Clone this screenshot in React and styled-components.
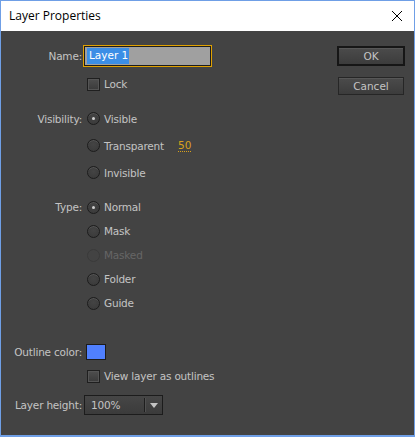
import { createGlobalStyle, styled } from "styled-components"

const GlobalStyle = createGlobalStyle`
   html, body {
      margin: 0;
      padding: 0;
      background: #ffffff;
   }
   * {
      box-sizing: border-box;
   }
`

const Window = styled.div`
   width: 415px;
   height: 437px;
   display: flex;
   flex-direction: column;
   border: 1px solid #6f9fe6;
   border-bottom-width: 2px;
   background: #434343;
   font-family: Tahoma, "DejaVu Sans", sans-serif;
   font-size: 10.5px;
   letter-spacing: -0.2px;
   color: #c4c4c4;
`
const TitleBar = styled.div`
   height: 30px;
   flex: none;
   display: flex;
   align-items: center;
   justify-content: space-between;
   padding: 0 9px 1px 8px;
   background: #ffffff;
   color: #000000;
   font-family: "Segoe UI", "Open Sans", sans-serif;
   font-size: 12px;
   letter-spacing: 0;
`
const CloseIcon = styled.svg`
   width: 12px;
   height: 12px;
   margin-right: 2px;
`
const Body = styled.div`
   flex: 1;
   display: flex;
`
const Form = styled.div`
   flex: 1;
   display: flex;
   flex-direction: column;
   padding-top: 14px;
`
const Row = styled.div`
   display: grid;
   grid-template-columns: 81px 1fr;
   column-gap: 1px;
   align-items: center;
   height: ${p => p.$h || 24}px;
   margin-top: ${p => p.$mt || 0}px;
`
const Label = styled.span`
   text-align: right;
   white-space: nowrap;
`
const Control = styled.div`
   display: flex;
   align-items: center;
   padding-left: ${p => p.$pl || 0}px;
`
const NameInput = styled.div`
   width: 129px;
   height: 22px;
   border: 1px solid #e0a100;
   padding: 1px;
   background: #1c1c1c;
`
const NameField = styled.div`
   height: 100%;
   background: #a0a0a0;
   display: flex;
   align-items: center;
   padding-left: 2px;
`
const Selected = styled.span`
   background: #3b8ee6;
   color: #ffffff;
   padding: 1px 1px 2px 2px;
   line-height: 13px;
   letter-spacing: 0;
`
const Box = styled.span`
   width: 13px;
   height: 13px;
   border: 1px solid #1f1f1f;
   background: linear-gradient(#4e4e4e, #3a3a3a);
   box-shadow: inset 0 0 0 1px #555;
   margin-right: 4px;
   flex: none;
`
const Radio = styled.span`
   width: 13px;
   height: 13px;
   border-radius: 50%;
   border: 1px solid ${p => (p.$disabled ? "#3a3a3a" : "#1c1c1c")};
   background: ${p => (p.$disabled ? "#434343" : "radial-gradient(circle at 50% 40%, #444 0%, #383838 100%)")};
   box-shadow: ${p => (p.$disabled ? "none" : "inset 0 1px 0 #555")};
   margin-right: 4px;
   flex: none;
   display: flex;
   align-items: center;
   justify-content: center;
   &::after {
      content: "";
      width: 3px;
      height: 3px;
      border-radius: 50%;
      background: #d0d0d0;
      display: ${p => (p.$checked ? "block" : "none")};
   }
`
const OptionText = styled.span`
   color: ${p => (p.$disabled ? "#666666" : "#c4c4c4")};
   white-space: nowrap;
`
const Amount = styled.span`
   margin-left: 14px;
   color: #d9a11c;
   border-bottom: 1px dotted #d9a11c;
   line-height: 11px;
   letter-spacing: 0;
`
const Swatch = styled.span`
   width: 20px;
   height: 16px;
   border: 1px solid #1c1c1c;
   background: #5080ff;
`
const Dropdown = styled.div`
   width: 79px;
   height: 20px;
   border: 1px solid #1c1c1c;
   background: linear-gradient(#464646, #3b3b3b);
   display: flex;
   align-items: center;
`
const DropValue = styled.span`
   flex: 1;
   padding-left: 6px;
`
const Divider = styled.span`
   width: 1px;
   height: 14px;
   background: #1e1e1e;
   box-shadow: 1px 0 0 #505050;
`
const Arrow = styled.span`
   width: 17px;
   display: flex;
   justify-content: center;
   &::after {
      content: "";
      border-left: 4px solid transparent;
      border-right: 4px solid transparent;
      border-top: 5px solid #c4c4c4;
   }
`
const Buttons = styled.div`
   display: flex;
   flex-direction: column;
   align-items: flex-end;
   gap: 11px;
   padding: 15px 9px 0 0;
`
const Button = styled.button`
   width: ${p => (p.$default ? 68 : 66)}px;
   height: ${p => (p.$default ? 20 : 18)}px;
   margin-right: ${p => (p.$default ? 0 : 1)}px;
   border: ${p => (p.$default ? "2px solid #161616" : "1px solid #262626")};
   background: linear-gradient(#4b4b4b, #3c3c3c);
   box-shadow: inset 0 1px 0 #575757;
   color: #c4c4c4;
   font-family: Tahoma, "DejaVu Sans", sans-serif;
   font-size: 10.5px;
   padding: 0;
   cursor: pointer;
`

const RadioRow = ({ h, mt, label, checked, disabled, children }) => (
   <Row $h={h} $mt={mt}>
      <Label>{label}</Label>
      <Control $pl={4}>
         <Radio $checked={checked} $disabled={disabled} />
         <OptionText $disabled={disabled}>{children}</OptionText>
      </Control>
   </Row>
)

const App = () => {
   return (
      <Window>
         <GlobalStyle />
         <TitleBar>
            <span>Layer Properties</span>
            <CloseIcon viewBox="0 0 12 12">
               <path d="M1 1 L11 11 M11 1 L1 11" stroke="#000" strokeWidth="1" fill="none" />
            </CloseIcon>
         </TitleBar>
         <Body>
            <Form>
               <Row $h={22}>
                  <Label>Name:</Label>
                  <Control>
                     <NameInput>
                        <NameField>
                           <Selected>Layer 1</Selected>
                        </NameField>
                     </NameInput>
                  </Control>
               </Row>
               <Row $mt={5}>
                  <span />
                  <Control $pl={4}>
                     <Box />
                     <OptionText>Lock</OptionText>
                  </Control>
               </Row>

               <RadioRow h={27} mt={9} label="Visibility:" checked>Visible</RadioRow>
               <Row $h={27}>
                  <span />
                  <Control $pl={4}>
                     <Radio />
                     <OptionText>Transparent</OptionText>
                     <Amount>50</Amount>
                  </Control>
               </Row>
               <RadioRow h={27}>Invisible</RadioRow>

               <RadioRow mt={9} label="Type:" checked>Normal</RadioRow>
               <RadioRow>Mask</RadioRow>
               <RadioRow disabled>Masked</RadioRow>
               <RadioRow>Folder</RadioRow>
               <RadioRow>Guide</RadioRow>

               <Row $mt={25}>
                  <Label>Outline color:</Label>
                  <Control $pl={3}>
                     <Swatch />
                  </Control>
               </Row>
               <Row>
                  <span />
                  <Control $pl={4}>
                     <Box />
                     <OptionText>View layer as outlines</OptionText>
                  </Control>
               </Row>
               <Row $mt={5}>
                  <Label>Layer height:</Label>
                  <Control $pl={1}>
                     <Dropdown>
                        <DropValue>100%</DropValue>
                        <Divider />
                        <Arrow />
                     </Dropdown>
                  </Control>
               </Row>
            </Form>
            <Buttons>
               <Button $default>OK</Button>
               <Button>Cancel</Button>
            </Buttons>
         </Body>
      </Window>
   )
}

export default App
